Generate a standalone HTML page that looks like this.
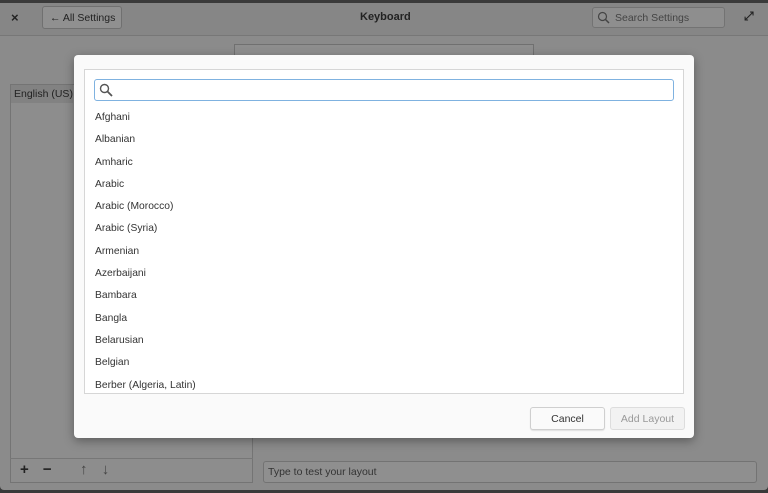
<!DOCTYPE html><html><head><style>
body{margin:0;width:768px;height:493px;overflow:hidden;background:#3a3a3a;font-family:"Liberation Sans",sans-serif;font-size:11px;position:relative}
.a{position:absolute;box-sizing:border-box;white-space:nowrap}
</style></head><body>
<div class="a" style="left:0;top:3px;width:768px;height:487px;background:#8b8b8b;border-radius:4px"></div>
<div class="a" style="left:0;top:3px;width:768px;height:33px;background:#868686;border-bottom:1px solid #777"></div>
<div class="a" style="left:11px;top:10px;font-size:13px;color:#222;font-weight:bold">×</div>
<div class="a" style="left:42px;top:6px;width:80px;height:23px;border:1px solid #707070;border-radius:3px;background:#909090;color:#222;padding:5px 0 0 7px;font-size:10.5px"><b>←</b> All Settings</div>
<div class="a" style="left:360px;top:11px;font-weight:bold;color:#222">Keyboard</div>
<div class="a" style="left:592px;top:7px;width:133px;height:21px;border:1px solid #737373;border-radius:3px;background:#8e8e8e;color:#444;padding:4px 0 0 22px;font-size:10.5px">Search Settings<svg style="position:absolute;left:4px;top:3px" width="14" height="14"><circle cx="5.5" cy="5.5" r="4" fill="none" stroke="#444" stroke-width="1.2"/><path d="M8.5 8.5L12 12" stroke="#444" stroke-width="1.5"/></svg></div>
<div class="a" style="left:744px;top:9px;color:#222;font-size:12px;font-weight:bold">⤢</div>
<div class="a" style="left:234px;top:44px;width:300px;height:14px;border:1px solid #707070;background:#8e8e8e"></div>
<div class="a" style="left:10px;top:84px;width:243px;height:399px;border:1px solid #747474;background:#8d8d8d"></div>
<div class="a" style="left:11px;top:85px;width:62px;height:18px;background:#828282;color:#222;padding:3px 0 0 3px;font-size:10.5px">English (US)</div>
<div class="a" style="left:10px;top:458px;width:243px;height:1px;background:#777"></div>
<div class="a" style="left:20px;top:461px;font-size:15px;color:#222;font-weight:bold;word-spacing:10px">+ −&nbsp; <span style="color:#444">↑ ↓</span></div>
<div class="a" style="left:263px;top:461px;width:494px;height:22px;border:1px solid #737373;border-radius:3px;background:#8f8f8f;color:#333;padding:4px 0 0 4px;font-size:10.5px">Type to test your layout</div>
<div class="a" style="left:74px;top:55px;width:620px;height:383px;background:#fafafa;border-radius:4px;box-shadow:0 3px 10px rgba(0,0,0,.35)"></div>
<div class="a" style="left:84px;top:69px;width:600px;height:325px;background:#fff;border:1px solid #d6d6d6"></div>
<div class="a" style="left:94px;top:79px;width:580px;height:22px;border:1px solid #7fb2e0;border-radius:3px;background:#fff"><svg style="position:absolute;left:4px;top:3px" width="14" height="14"><circle cx="5.5" cy="5.5" r="4" fill="none" stroke="#555" stroke-width="1.4"/><path d="M8.5 8.5L13 13" stroke="#555" stroke-width="1.8"/></svg></div>
<div class="a" style="left:95px;top:107px;color:#333;line-height:22.3px;font-size:10.3px">Afghani<br>Albanian<br>Amharic<br>Arabic<br>Arabic (Morocco)<br>Arabic (Syria)<br>Armenian<br>Azerbaijani<br>Bambara<br>Bangla<br>Belarusian<br>Belgian<br>Berber (Algeria, Latin)</div>
<div class="a" style="left:530px;top:407px;width:75px;height:23px;border:1px solid #cfcfcf;border-radius:3px;background:#fafafa;box-shadow:0 1px 1px rgba(0,0,0,.1);color:#333;text-align:center;padding-top:5px;font-size:10.5px">Cancel</div>
<div class="a" style="left:610px;top:407px;width:75px;height:23px;border:1px solid #ddd;border-radius:3px;background:#f2f2f2;color:#999;text-align:center;padding-top:5px;font-size:10.5px">Add Layout</div>
</body></html>
